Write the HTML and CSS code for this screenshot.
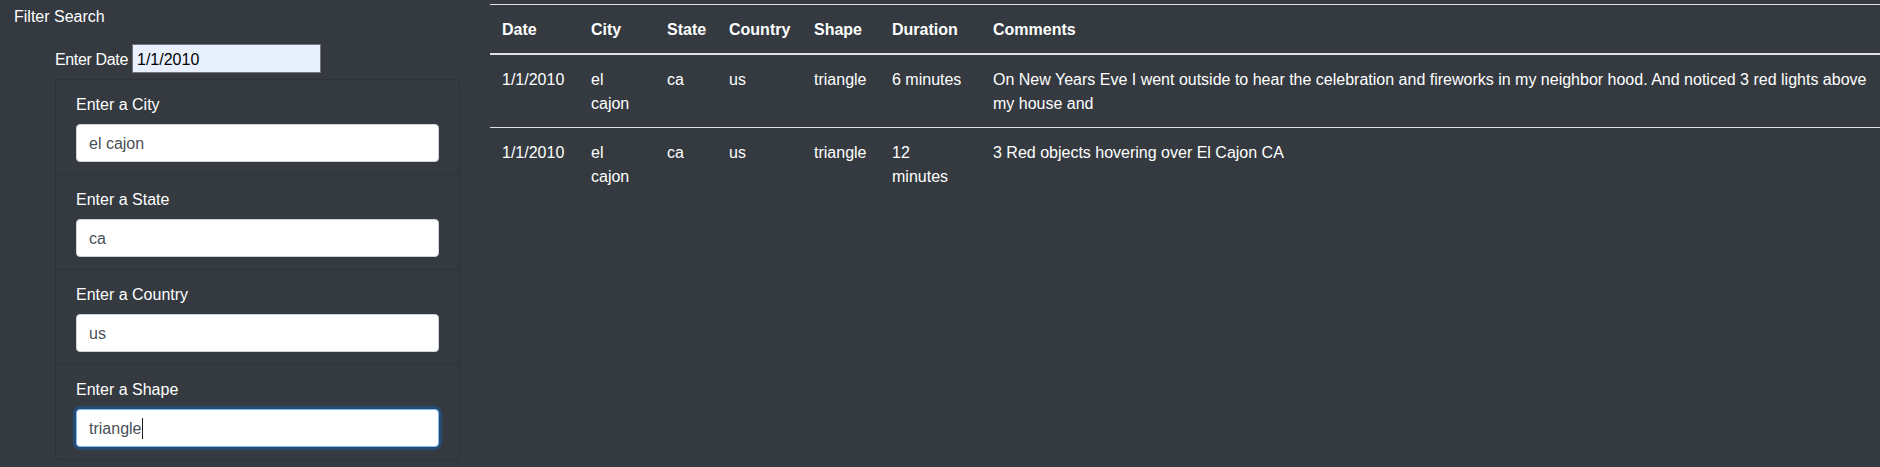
FILE: index.html
```html
<!DOCTYPE html>
<html lang="en">
<head>
<meta charset="utf-8">
<title>UFO Sightings</title>
<link rel="stylesheet" href="styles.css">
</head>
<body>
<div class="page">
  <aside class="filters">
    <div class="filters-title">Filter Search</div>
    <div class="date-row">
      <label class="date-label" for="datetime">Enter Date</label>
      <input class="date-input" id="datetime" type="text" value="1/1/2010">
    </div>
    <ul class="filter-list">
      <li class="filter-item">
        <label class="filter-label" for="city">Enter a City</label>
        <input class="form-control" id="city" type="text" value="el cajon">
      </li>
      <li class="filter-item">
        <label class="filter-label" for="state">Enter a State</label>
        <input class="form-control" id="state" type="text" value="ca">
      </li>
      <li class="filter-item">
        <label class="filter-label" for="country">Enter a Country</label>
        <input class="form-control" id="country" type="text" value="us">
      </li>
      <li class="filter-item">
        <label class="filter-label" for="shape">Enter a Shape</label>
        <div class="input-wrap">
          <input class="form-control is-focused" id="shape" type="text" value="triangle">
          <span class="caret"></span>
        </div>
      </li>
    </ul>
  </aside>
  <main class="results">
    <table class="ufo-table">
      <colgroup>
        <col class="col-date">
        <col class="col-city">
        <col class="col-state">
        <col class="col-country">
        <col class="col-shape">
        <col class="col-duration">
        <col class="col-comments">
      </colgroup>
      <thead>
        <tr>
          <th>Date</th>
          <th>City</th>
          <th>State</th>
          <th>Country</th>
          <th>Shape</th>
          <th>Duration</th>
          <th class="comments">Comments</th>
        </tr>
      </thead>
      <tbody>
        <tr>
          <td>1/1/2010</td>
          <td>el cajon</td>
          <td>ca</td>
          <td>us</td>
          <td>triangle</td>
          <td>6 minutes</td>
          <td class="comments">On New Years Eve I went outside to hear the celebration and fireworks in my neighbor hood. And noticed 3 red lights above my house and</td>
        </tr>
        <tr>
          <td>1/1/2010</td>
          <td>el cajon</td>
          <td>ca</td>
          <td>us</td>
          <td>triangle</td>
          <td>12 minutes</td>
          <td class="comments">3 Red objects hovering over El Cajon CA</td>
        </tr>
      </tbody>
    </table>
  </main>
</div>
</body>
</html>
```

FILE: styles.css
```css
html, body {
  margin: 0;
  padding: 0;
  background: #343a40;
}

body {
  color: #fff;
  font-family: "Liberation Sans", Arial, sans-serif;
  font-size: 16px;
  line-height: 1.5;
}

.page {
  display: flex;
  align-items: flex-start;
  height: 467px;
}

.filters {
  width: 490px;
  flex: none;
  padding-top: 5px;
  box-sizing: border-box;
}

.filters-title {
  padding-left: 14px;
  line-height: 24px;
}

.date-row {
  display: flex;
  align-items: center;
  gap: 0;
  margin: 15px 0 6px 55px;
}

.date-label {
  width: 77px;
  flex: none;
  line-height: 24px;
  padding-top: 3px;
  white-space: nowrap;
  letter-spacing: -0.35px;
}

.date-input {
  width: 189px;
  height: 29px;
  box-sizing: border-box;
  border: 1px solid #767676;
  background: #e8f0fe;
  color: #000;
  font-family: inherit;
  font-size: 16px;
  padding: 2px 4px 0;
  margin: 0;
  outline: none;
}

.filter-list {
  list-style: none;
  margin: 0 0 0 55px;
  padding: 0;
  width: 405px;
  box-sizing: border-box;
}

.filter-item {
  padding: 12px 20px;
  border: 1px solid rgba(0, 0, 0, 0.125);
  background: #343a40;
}

.filter-item + .filter-item {
  border-top-width: 0;
}

.filter-item:first-child {
  border-top-left-radius: 4px;
  border-top-right-radius: 4px;
}

.filter-item:last-child {
  border-bottom-left-radius: 4px;
  border-bottom-right-radius: 4px;
}

.filter-label {
  display: block;
  margin: 0 0 8px;
  padding-top: 1px;
  height: 23px;
  line-height: 24px;
}

.form-control {
  display: block;
  width: 100%;
  height: 38px;
  box-sizing: border-box;
  margin: 0;
  padding: 7px 12px 5px;
  font-family: inherit;
  font-size: 16px;
  line-height: 1.5;
  color: #495057;
  background: #fff;
  border: 1px solid #ced4da;
  border-radius: 4px;
  outline: none;
}

.form-control.is-focused {
  border-color: #80bdff;
  box-shadow: 0 0 0 3.2px rgba(0, 123, 255, 0.25);
}

.input-wrap {
  position: relative;
}

.caret {
  position: absolute;
  left: 66px;
  top: 9px;
  width: 1px;
  height: 21px;
  background: #1a1a1a;
}

.results {
  flex: 1;
  padding-top: 4px;
  min-width: 0;
}

.ufo-table {
  width: 1390px;
  border-collapse: collapse;
  table-layout: fixed;
  color: #fff;
}

.col-date { width: 89px; }
.col-city { width: 76px; }
.col-state { width: 62px; }
.col-country { width: 85px; }
.col-shape { width: 78px; }
.col-duration { width: 101px; }
.col-comments { width: auto; }

.ufo-table th,
.ufo-table td {
  padding: 13px 12px 11px;
  text-align: left;
  vertical-align: top;
  border-top: 1px solid #dee2e6;
  line-height: 24px;
}

.ufo-table thead th {
  vertical-align: bottom;
  border-bottom: 2px solid #dee2e6;
  font-weight: bold;
}

.ufo-table .comments {
  padding-right: 6px;
}
```
